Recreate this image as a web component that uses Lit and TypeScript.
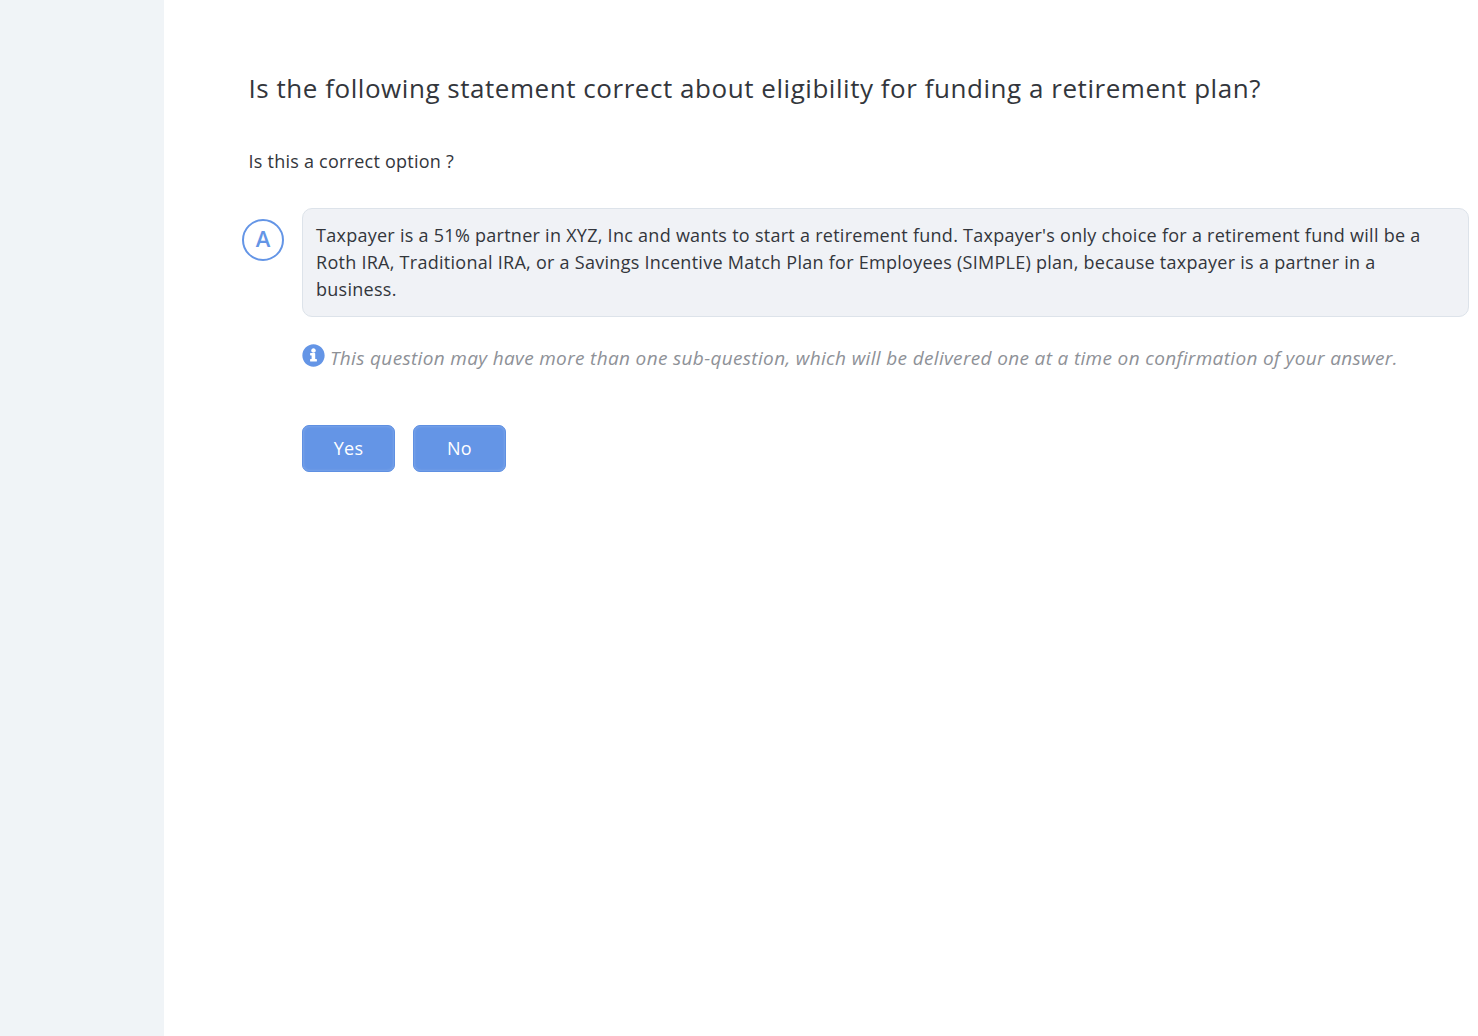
import { LitElement, css, html } from "lit";
import { customElement } from "lit/decorators.js";

@customElement("app-root")
export class AppRoot extends LitElement {
  override render() {
    return html`
      <aside class="sidebar"></aside>
      <main class="content">
        <h1 class="title">Is the following statement correct about eligibility for funding a retirement plan?</h1>
        <p class="prompt">Is this a correct option ?</p>
        <div class="option">
          <div class="badge">A</div>
          <div class="statement">
            Taxpayer is a 51% partner in XYZ, Inc and wants to start a retirement fund. Taxpayer's only choice for a retirement fund will be a Roth IRA, Traditional IRA, or a Savings Incentive Match Plan for Employees (SIMPLE) plan, because taxpayer is a partner in a business.
          </div>
        </div>
        <div class="note">
          <svg class="info" viewBox="0 0 512 512" width="23" height="23">
            <path
              fill="#6495e6"
              d="M256 8C119 8 8 119 8 256s111 248 248 248 248-111 248-248S393 8 256 8zm0 86c28 0 51 23 51 51s-23 51-51 51-51-23-51-51 23-51 51-51zm76 284c0 7-5 12-12 12H192c-7 0-12-5-12-12v-32c0-7 5-12 12-12h22v-80h-22c-7 0-12-5-12-12v-32c0-7 5-12 12-12h90c7 0 12 5 12 12v124h26c7 0 12 5 12 12v32z"
            ></path>
          </svg>
          <span>This question may have more than one sub-question, which will be delivered one at a time on confirmation of your answer.</span>
        </div>
        <div class="actions">
          <button class="btn">Yes</button>
          <button class="btn">No</button>
        </div>
      </main>
    `;
  }

  static override styles = css`
    :host {
      display: flex;
      min-height: 1036px;
      background: #fff;
      font-family: "Open Sans", sans-serif;
      color: #33363c;
      overflow: hidden;
    }
    .sidebar {
      flex: 0 0 164px;
      background: #f0f4f7;
    }
    .content {
      flex: 1;
      min-width: 0;
      padding: 70px 9px 0 78px;
    }
    .title {
      margin: 0 0 0 6.500px;
      font-size: 26px;
      line-height: 36px;
      font-weight: 400;
      letter-spacing: 0.54px;
    }
    .prompt {
      margin: 42px 0 0 6.500px;
      font-size: 18px;
      line-height: 27px;
      letter-spacing: 0.24px;
    }
    .option {
      display: flex;
      align-items: flex-start;
      gap: 18px;
      margin-top: 33px;
    }
    .badge {
      flex: 0 0 42px;
      height: 42px;
      margin-top: 11px;
      box-sizing: border-box;
      border: 2px solid #6495e6;
      border-radius: 50%;
      display: flex;
      align-items: center;
      justify-content: center;
      padding-bottom: 4px;
      color: #6495e6;
      font-size: 22px;
      font-weight: 600;
    }
    .statement {
      flex: 1;
      box-sizing: border-box;
      height: 109px;
      padding: 13px 13px;
      background: #f0f2f6;
      border: 1px solid #dde3ea;
      border-radius: 10px;
      font-size: 18px;
      line-height: 27px;
      letter-spacing: 0.27px;
    }
    .note {
      display: flex;
      align-items: flex-start;
      gap: 5px;
      margin: 27px 0 0 60px;
      font-size: 19px;
      line-height: 28px;
      letter-spacing: 0.34px;
      font-style: italic;
      color: #8e9197;
      white-space: nowrap;
    }
    .info {
      flex: none;
    }
    .actions {
      display: flex;
      gap: 18px;
      margin: 53px 0 0 60px;
    }
    .btn {
      width: 93px;
      height: 47px;
      border: 1px solid #5f90e2;
      border-radius: 7px;
      background: #6495e6;
      box-shadow: inset 0 0 3px rgba(255, 255, 255, 0.25);
      color: #fff;
      font-family: inherit;
      font-size: 18px;
      letter-spacing: 0.2px;
      padding: 0 0 2px;
    }
  `;
}
